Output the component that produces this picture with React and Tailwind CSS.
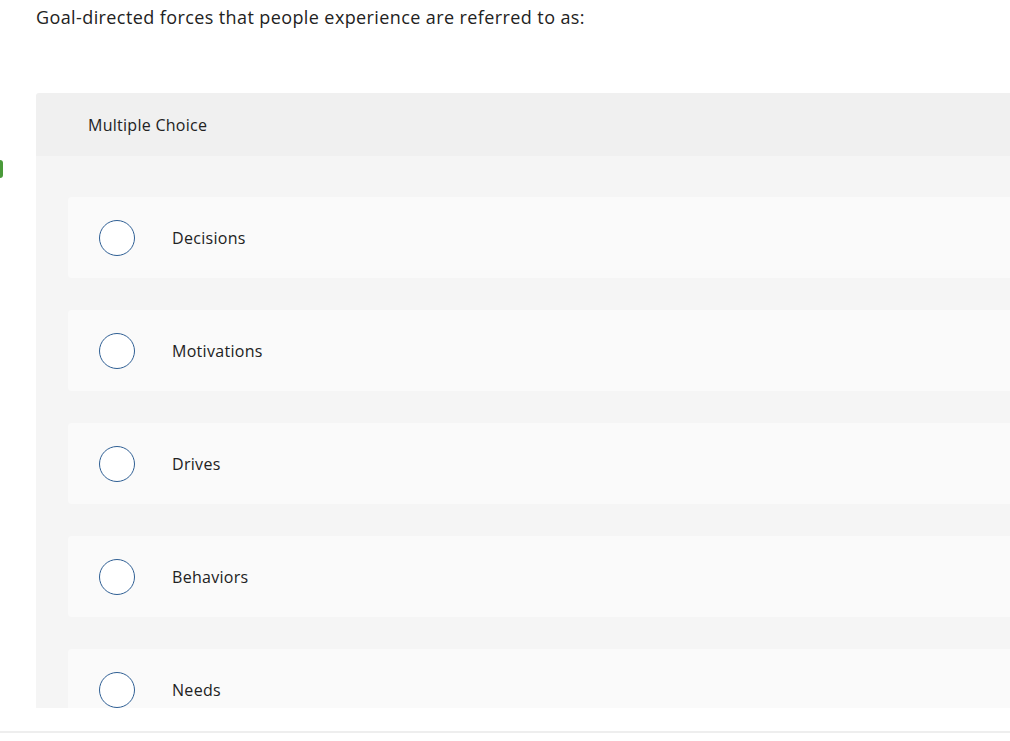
import React from 'react';

const options = ['Decisions', 'Motivations', 'Drives', 'Behaviors', 'Needs'];

const Option = ({ label }) => (
  <div className="flex items-center h-[81px] bg-[#fafafa] rounded-l-[4px] pl-[31px]">
    <span className="w-[36px] h-[36px] rounded-full border-[1.5px] border-[#2f5f94] bg-white shrink-0" />
    <span className="ml-[37px] text-[16px] leading-[20px] tracking-[0.3px] text-[#222]">{label}</span>
  </div>
);

export default function App() {
  return (
    <div
      className="relative w-[1010px] h-[741px] overflow-hidden bg-white"
      style={{ fontFamily: '"Open Sans", "Liberation Sans", Arial, sans-serif' }}
    >
      <div className="absolute left-0 top-[160px] w-[3px] h-[18px] rounded-r bg-[#4a9a3a]" />
      <div className="pl-[36px] pt-[5px]">
        <p className="text-[18px] leading-[24px] tracking-[0.4px] text-[#222]">
          Goal-directed forces that people experience are referred to as:
        </p>
        <div className="mt-[64px] w-[1000px] h-[615px] overflow-hidden rounded-tl-[3px]">
          <div className="h-[63px] bg-[#f0f0f0] flex items-center pl-[52px] text-[16px] tracking-[0.27px] text-[#222]">
            Multiple Choice
          </div>
          <div className="bg-[#f5f5f5] pl-[32px] pt-[41px] flex flex-col gap-[32px] pb-10">
            {options.map((o) => (
              <Option key={o} label={o} />
            ))}
          </div>
        </div>
      </div>
      <div className="absolute left-0 right-0 top-[731px] h-[2px] bg-[#eeeeee]" />
    </div>
  );
}
